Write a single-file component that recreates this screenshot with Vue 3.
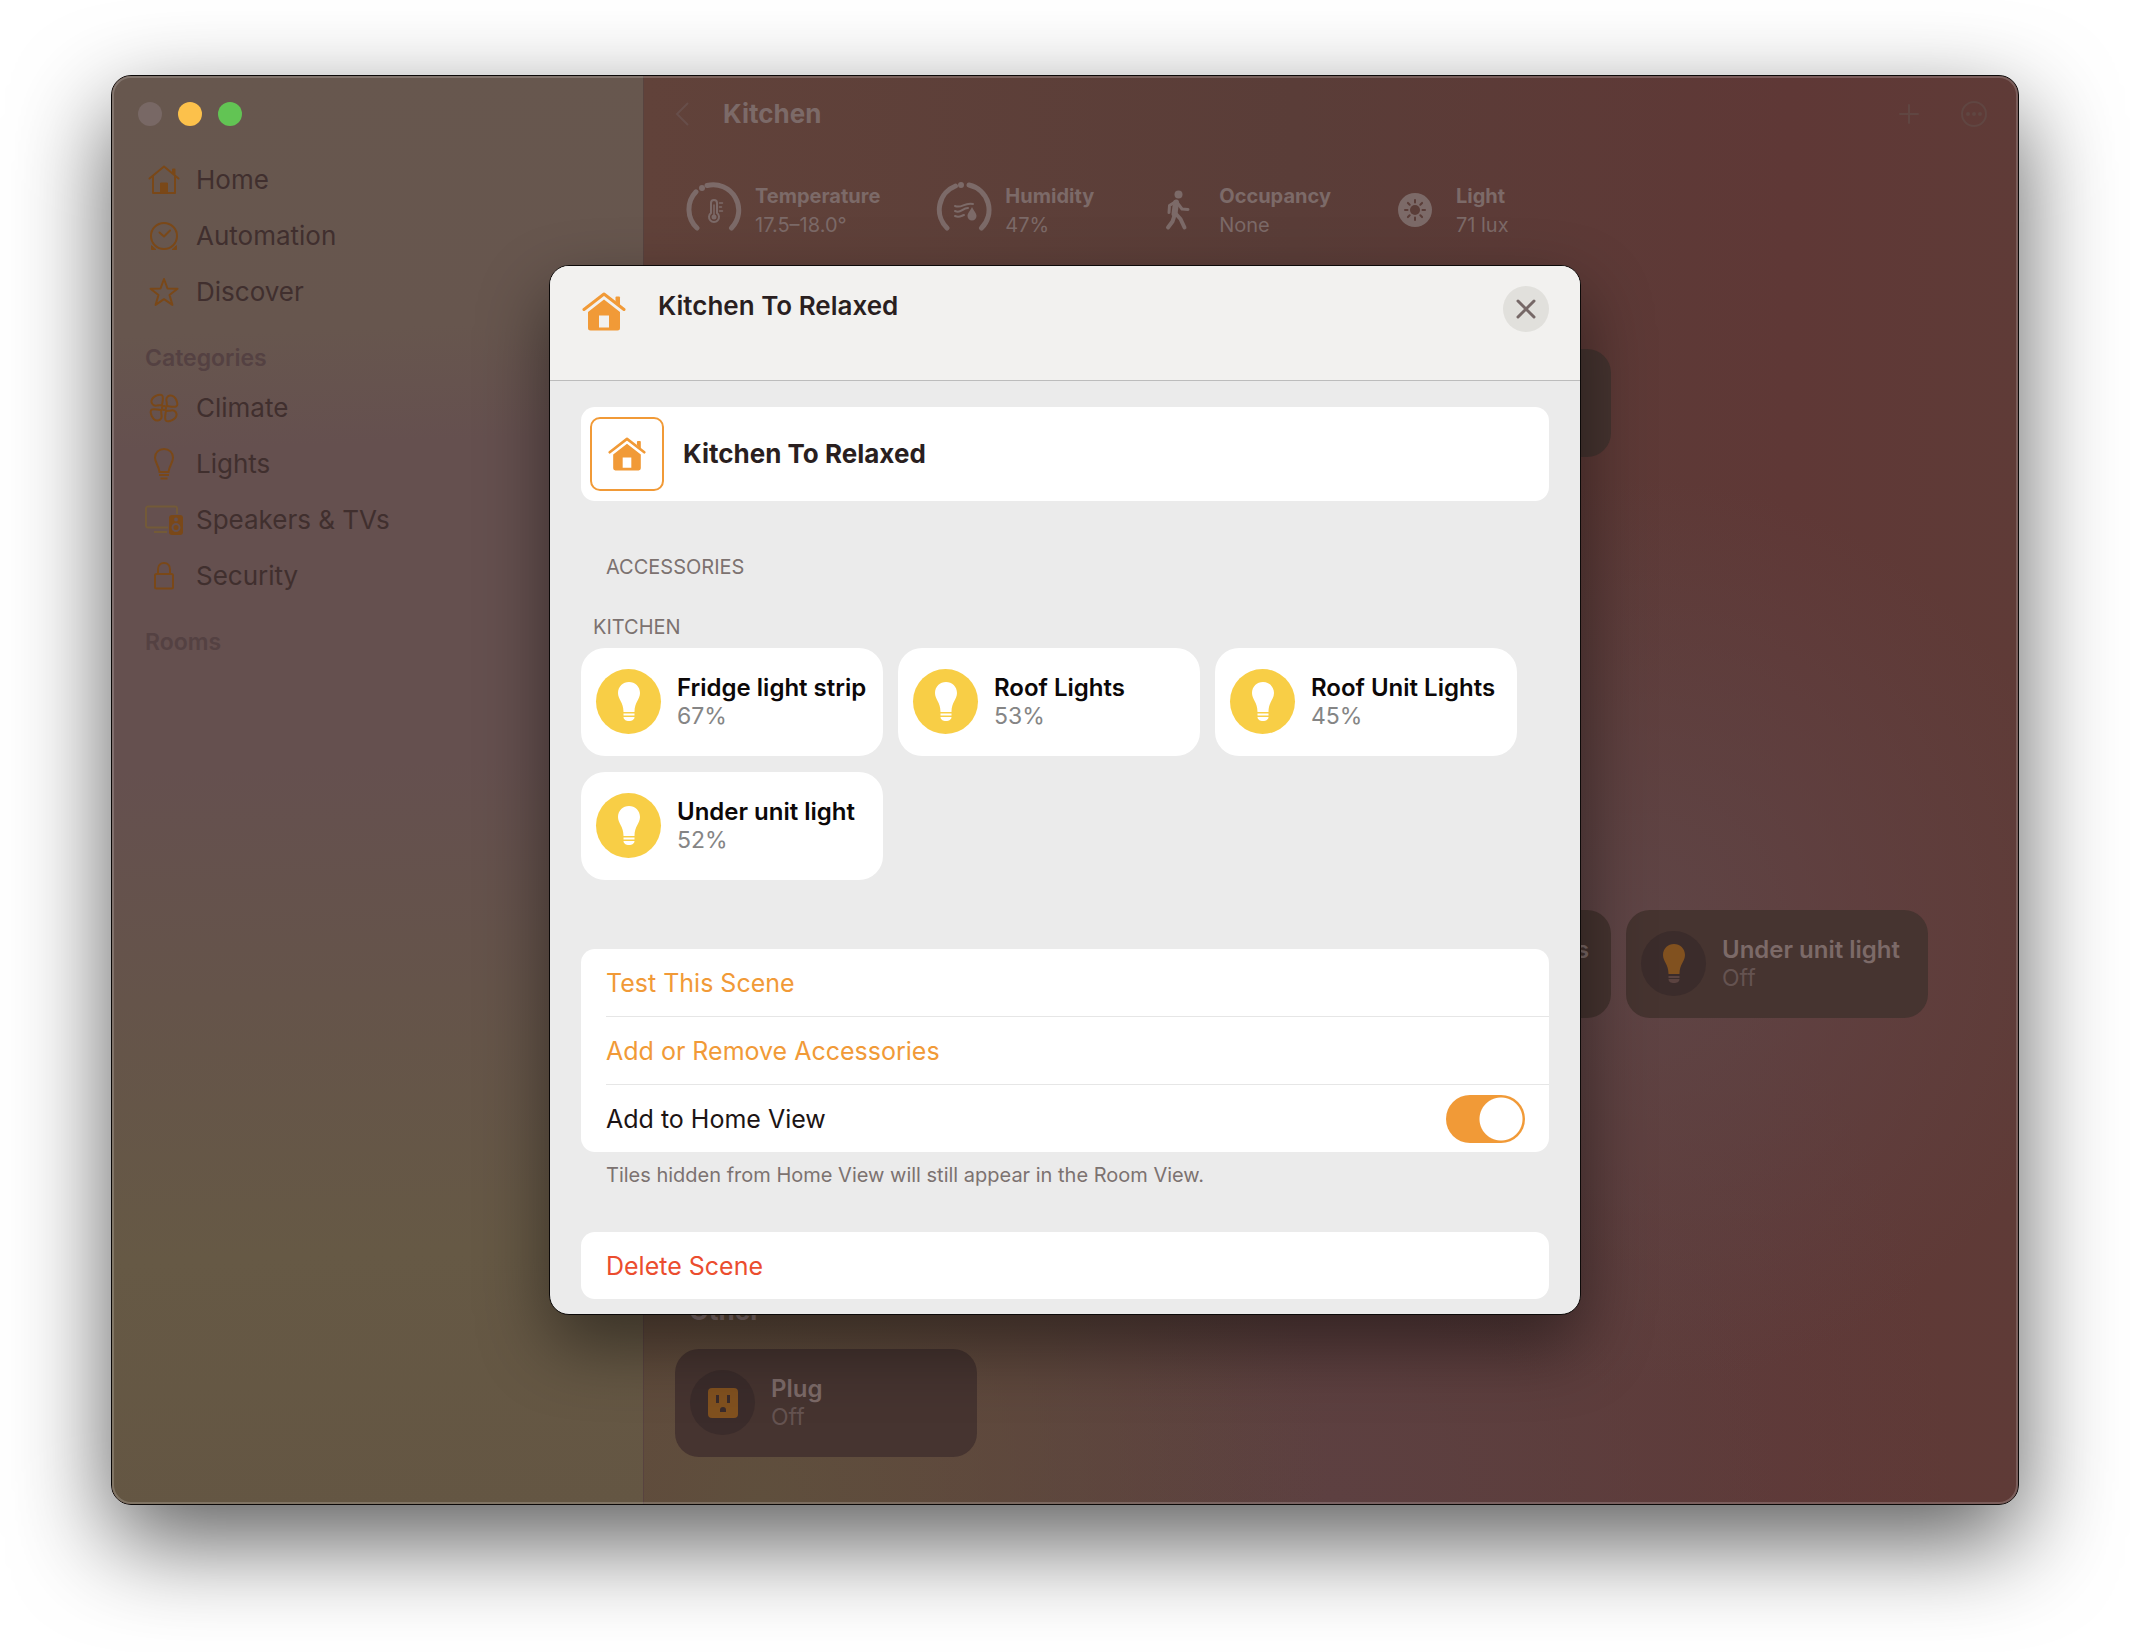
<script setup>
import { ref } from 'vue'

const mainLinks = [
  { label: 'Home', icon: 'home' },
  { label: 'Automation', icon: 'clock' },
  { label: 'Discover', icon: 'star' },
]

const categories = [
  { label: 'Climate', icon: 'fan' },
  { label: 'Lights', icon: 'bulb' },
  { label: 'Speakers & TVs', icon: 'speaker' },
  { label: 'Security', icon: 'lock' },
]

const sensors = [
  { label: 'Temperature', value: '17.5–18.0°', icon: 'thermometer' },
  { label: 'Humidity', value: '47%', icon: 'humidity' },
  { label: 'Occupancy', value: 'None', icon: 'walk' },
  { label: 'Light', value: '71 lux', icon: 'sun' },
]

const accessories = [
  { name: 'Fridge light strip', level: '67%' },
  { name: 'Roof Lights', level: '53%' },
  { name: 'Roof Unit Lights', level: '45%' },
  { name: 'Under unit light', level: '52%' },
]

const sceneName = ref('Kitchen To Relaxed')
const inHomeView = ref(true)
</script>

<template>
  <div class="desktop">
    <div class="window">
      <aside class="sidebar">
        <div class="traffic">
          <button class="dot dot-close" aria-label="Close window"></button>
          <button class="dot dot-min" aria-label="Minimise window"></button>
          <button class="dot dot-zoom" aria-label="Zoom window"></button>
        </div>
        <nav>
          <a v-for="link in mainLinks" :key="link.label" href="#" class="nav-link">
            <span class="nav-icon">
              <svg v-if="link.icon === 'home'" width="32" height="30" viewBox="0 0 32 30" fill="none" stroke="currentColor" stroke-width="2" stroke-linecap="round" stroke-linejoin="round">
                <path d="M1.500 13.500L16 1.500l14.500 12M5 11v17h22V11M25 9V4.500h1.500V10" />
                <path d="M12.500 28v-10h7v10z" fill="currentColor" stroke-width="1" />
              </svg>
              <svg v-else-if="link.icon === 'clock'" width="28" height="30" viewBox="0 0 28 30" fill="none" stroke="currentColor" stroke-width="2" stroke-linecap="round" stroke-linejoin="round">
                <circle cx="14" cy="15" r="13" />
                <path d="M9.500 11.500l4.500 4 6-6" />
                <path d="M1.500 25v3.500h4zM26.500 25v3.500h-4z" fill="currentColor" stroke-width="1" />
              </svg>
              <svg v-else width="30" height="30" viewBox="0 0 30 30" fill="none" stroke="currentColor" stroke-width="2" stroke-linejoin="round">
                <path d="M15 2l3.500 9.500 10 .3-8 6.200 2.900 9.900L15 22.200l-8.400 5.700L9.500 18l-8-6.200 10-.3z" />
              </svg>
            </span>
            {{ link.label }}
          </a>
          <h2 class="nav-heading">Categories</h2>
          <a v-for="link in categories" :key="link.label" href="#" class="nav-link">
            <span class="nav-icon">
              <svg v-if="link.icon === 'fan'" width="30" height="30" viewBox="-15 -15 30 30" fill="none" stroke="currentColor" stroke-width="2" stroke-linejoin="round">
                <path v-for="turn in [0, 90, 180, 270]" :key="turn" :transform="`rotate(${turn})`" d="M-2 -3C-1.500 -6 -.5 -9 -1.500 -12C-2 -13.500 -4 -13.500 -6 -13C-10 -12 -13 -9 -12.500 -6C-12 -3 -9.500 -2 -7 -2.500C-5 -3 -4 -2.500 -2 -3z" />
                <circle r="2" />
              </svg>
              <svg v-else-if="link.icon === 'bulb'" width="20" height="32" viewBox="0 0 20 32" fill="none" stroke="currentColor" stroke-width="2">
                <path d="M5.500 24C5 18 1 15 1 9.500C1 4.500 5 1 10 1s9 3.500 9 8.500C19 15 15 18 14.500 24z" />
                <path d="M5 27h10M6.500 30.500h7" />
              </svg>
              <svg v-else-if="link.icon === 'speaker'" width="38" height="30" viewBox="0 0 38 30" fill="none">
                <path d="M32 9V3.500a2 2 0 0 0-2-2H3a2 2 0 0 0-2 2v17a2 2 0 0 0 2 2h20M9 27h13" stroke="#735a38" stroke-width="2" />
                <rect x="24" y="10" width="14" height="20" rx="3" fill="currentColor" />
                <circle cx="31" cy="14.500" r="2" fill="#65504f" />
                <circle cx="31" cy="22.500" r="3.500" stroke="#65504f" stroke-width="2" />
              </svg>
              <svg v-else width="20" height="28" viewBox="0 0 20 28" fill="none" stroke="currentColor" stroke-width="2">
                <rect x="1" y="12" width="18" height="14.500" rx="1.500" />
                <path d="M4 12V7.500C4 3.500 6.500 1 10 1s6 2.500 6 6.500V12" />
              </svg>
            </span>
            {{ link.label }}
          </a>
          <h2 class="nav-heading">Rooms</h2>
        </nav>
      </aside>

      <main class="room">
        <header class="toolbar">
          <button class="tool back" aria-label="Back">
            <svg width="14" height="24" viewBox="0 0 14 24" fill="none" stroke="currentColor" stroke-width="2"><path d="M13 1L2 12l11 11" /></svg>
          </button>
          <h1>Kitchen</h1>
          <button class="tool" aria-label="Add">
            <svg width="20" height="20" viewBox="0 0 20 20" fill="none" stroke="currentColor" stroke-width="2" stroke-linecap="round"><path d="M10 1v18M1 10h18" /></svg>
          </button>
          <button class="tool" aria-label="More">
            <svg width="26" height="26" viewBox="0 0 26 26" fill="currentColor"><circle cx="13" cy="13" r="12" fill="none" stroke="currentColor" stroke-width="2" /><circle cx="7" cy="13" r="2" /><circle cx="13" cy="13" r="2" /><circle cx="19" cy="13" r="2" /></svg>
          </button>
        </header>

        <ul class="sensors">
          <li v-for="sensor in sensors" :key="sensor.label" class="sensor">
            <svg v-if="sensor.icon === 'thermometer'" width="56" height="56" viewBox="0 0 56 56" fill="none" stroke="currentColor" stroke-linecap="round">
              <path d="M11 46A25.500 25.500 0 0 1 10 9.800M21 3.500A25.500 25.500 0 0 1 45.500 46" stroke-width="5" />
              <circle cx="16" cy="6" r="3" fill="currentColor" stroke="none" />
              <path d="M25 31v-10a3 3 0 0 1 6 0v10a5 5 0 1 1-6 0z" stroke-width="2" />
              <circle cx="28" cy="35" r="2.500" fill="currentColor" stroke="none" />
              <path d="M28 34V23M33.500 21h3M33.500 25h2M33.500 29h3" stroke-width="1.500" />
            </svg>
            <svg v-else-if="sensor.icon === 'humidity'" width="56" height="56" viewBox="0 0 56 56" fill="none" stroke="currentColor" stroke-linecap="round">
              <path d="M11 46A25.500 25.500 0 0 1 19.500 4M33 3A25.500 25.500 0 0 1 45.500 46" stroke-width="5" />
              <circle cx="25" cy="3" r="3" fill="currentColor" stroke="none" />
              <path d="M19 24c7 3 9-4 18-2M19 29c6 3 7-3 13-3M19 34c4 2 6 0 9-1" stroke-width="2" />
              <path d="M36 25c2 4 4.500 6.500 4.500 9a4.500 4.500 0 0 1-9 0c0-2.500 2.500-5 4.500-9z" fill="currentColor" stroke="none" />
            </svg>
            <svg v-else-if="sensor.icon === 'walk'" width="56" height="56" viewBox="0 0 56 56" fill="none" stroke="currentColor" stroke-linecap="round" stroke-linejoin="round">
              <circle cx="28.500" cy="12.500" r="4" fill="currentColor" stroke="none" />
              <path d="M26 20.500L24.500 32" stroke-width="6" />
              <path d="M25 20l-5.500 3.500-.5 7M27.500 21l4.500 6 6 .5" stroke-width="3" />
              <path d="M26 32l4.500 5 4 8.500M24 35l-1.500 4.500-4.500 6" stroke-width="4" />
            </svg>
            <svg v-else width="56" height="56" viewBox="0 0 56 56">
              <circle cx="28" cy="28" r="17" fill="currentColor" />
              <circle cx="28" cy="28" r="5" fill="#5a3d38" />
              <path v-for="turn in [0, 45, 90, 135, 180, 225, 270, 315]" :key="turn" :transform="`rotate(${turn} 28 28)`" d="M28 18v2.500" stroke="#5a3d38" stroke-width="2" stroke-linecap="round" />
            </svg>
            <p>
              <strong>{{ sensor.label }}</strong>
              <span>{{ sensor.value }}</span>
            </p>
          </li>
        </ul>

        <section class="group scenes">
          <div class="tile dim third"></div>
        </section>

        <section class="group lights">
          <article class="tile dim third">
            <span class="badge"></span>
            <p><strong>Roof Unit Lights</strong></p>
          </article>
          <article class="tile dim">
            <span class="badge">
              <svg width="22" height="40" viewBox="0 0 22 40" fill="currentColor">
                <path d="M5.500 30C5.500 20 0 17.500 0 11C0 4.500 5 0 11 0s11 4.500 11 11C22 17.500 16.500 20 16.500 30z" />
                <path d="M5.500 32h11v2h-11zM5.500 35h11c0 3-2.500 4-5.500 4s-5.500-1-5.500-4z" fill="#5b4340" />
              </svg>
            </span>
            <p><strong>Under unit light</strong><span>Off</span></p>
          </article>
        </section>

        <h2 class="group-title">Other</h2>
        <section class="group">
          <article class="tile dim">
            <span class="badge">
              <svg width="30" height="30" viewBox="0 0 30 30">
                <rect width="30" height="30" rx="4" fill="currentColor" />
                <path d="M8 7h3v8H8zM19 7h3v8h-3zM12 24v-2a3 3 0 0 1 6 0v2z" fill="#3a2b2b" />
              </svg>
            </span>
            <p><strong>Plug</strong><span>Off</span></p>
          </article>
        </section>
      </main>

      <div class="sheet" role="dialog" aria-labelledby="sheet-title">
        <header class="sheet-head">
          <svg class="house" width="44" height="39" viewBox="0 0 44 39">
            <path d="M2 17.500L22 2l20 15.500" fill="none" stroke="currentColor" stroke-width="3" stroke-linecap="round" stroke-linejoin="round" />
            <path d="M33.500 9V5.500a1 1 0 0 1 1-1h2.500a1 1 0 0 1 1 1V14z" fill="currentColor" />
            <path fill-rule="evenodd" d="M22 7.500L38 20v16a2.500 2.500 0 0 1-2.500 2.500h-27A2.500 2.500 0 0 1 6 36V20zM17 23.500v12h10v-12z" fill="currentColor" />
          </svg>
          <h2 id="sheet-title">Kitchen To Relaxed</h2>
          <button class="close" aria-label="Close">
            <svg width="20" height="20" viewBox="0 0 20 20" fill="none" stroke="currentColor" stroke-width="3" stroke-linecap="round"><path d="M2 2l16 16M18 2L2 18" /></svg>
          </button>
        </header>

        <div class="sheet-body">
          <div class="card name-card">
            <button class="icon-picker" aria-label="Choose icon">
              <svg width="38" height="34" viewBox="0 0 44 39">
                <path d="M2 17.500L22 2l20 15.500" fill="none" stroke="currentColor" stroke-width="3" stroke-linecap="round" stroke-linejoin="round" />
                <path d="M33.500 9V5.500a1 1 0 0 1 1-1h2.500a1 1 0 0 1 1 1V14z" fill="currentColor" />
                <path fill-rule="evenodd" d="M22 7.500L38 20v16a2.500 2.500 0 0 1-2.500 2.500h-27A2.500 2.500 0 0 1 6 36V20zM17 23.500v12h10v-12z" fill="currentColor" />
              </svg>
            </button>
            <input v-model="sceneName" type="text" aria-label="Scene name" />
          </div>

          <h3 class="caption">ACCESSORIES</h3>
          <h4 class="caption room-caption">KITCHEN</h4>
          <div class="tiles">
            <article v-for="item in accessories" :key="item.name" class="tile">
              <span class="badge">
                <svg width="22" height="40" viewBox="0 0 22 40" fill="currentColor">
                  <path d="M5.500 30C5.500 20 0 17.500 0 11C0 4.500 5 0 11 0s11 4.500 11 11C22 17.500 16.500 20 16.500 30z" />
                  <path d="M5.500 31.500h11v2h-11zM5.500 35h11c0 2.500-2.500 4-5.500 4s-5.500-1.500-5.500-4z" />
                </svg>
              </span>
              <p><strong>{{ item.name }}</strong><span>{{ item.level }}</span></p>
            </article>
          </div>

          <div class="card list">
            <button class="row">Test This Scene</button>
            <button class="row">Add or Remove Accessories</button>
            <div class="row plain">
              <label for="home-view">Add to Home View</label>
              <input id="home-view" v-model="inHomeView" type="checkbox" class="switch" />
            </div>
          </div>
          <p class="note">Tiles hidden from Home View will still appear in the Room View.</p>
          <div class="card">
            <button class="row danger">Delete Scene</button>
          </div>
        </div>
      </div>
    </div>
  </div>
</template>

<style>
body {
  margin: 0;
  background: #fff;
}
</style>

<style scoped>
* {
  box-sizing: border-box;
}

h1, h2, h3, h4, p, ul {
  margin: 0;
  padding: 0;
}

button {
  margin: 0;
  padding: 0;
  border: 0;
  background: none;
  color: inherit;
  font: inherit;
}

svg {
  display: block;
  flex: none;
}

.desktop {
  padding: 75px 111px 147px;
  font-family: Inter, "Liberation Sans", sans-serif;
  font-size: 25px;
  line-height: 32px;
}

.window {
  position: relative;
  display: flex;
  border: 1px solid #0c0908;
  border-radius: 20px;
  background:
    radial-gradient(circle at 80% 60%, #5f4546 0, #5f454600 26%),
    radial-gradient(ellipse at 34% 100%, #5f4f3d 0, #5f4f3d00 32%),
    radial-gradient(ellipse at 64% 100%, #5d4041 0, #5d404100 36%),
    linear-gradient(90deg, #61423a 28%, #5a3d38 62%, #5f3836 88%, #5f3b37);
  box-shadow: 0 36px 96px rgba(0, 0, 0, 0.64);
}

/* Light hairline just inside the window frame */
.window::after {
  content: "";
  position: absolute;
  inset: 0;
  border-radius: 19px;
  box-shadow: inset 0 0 0 2px rgba(255, 255, 255, 0.18);
  pointer-events: none;
}

.sidebar {
  flex: none;
  width: 532px;
  padding-left: 33px;
  border-radius: 19px 0 0 19px;
  background: linear-gradient(178deg, #67574e 0, #67564e 18%, #65504f 26%, #65504f 48%, #65544a 64%, #665945 82%, #645643);
  box-shadow: inset -1px 0 #58433f;
}

.traffic {
  display: flex;
  align-items: center;
  gap: 16px;
  height: 76px;
  margin-left: -7px;
}

.dot {
  width: 24px;
  height: 24px;
  border-radius: 50%;
}

.dot-close { background: #786865; }
.dot-min { background: #fcc14b; }
.dot-zoom { background: #62c454; }

.nav-link {
  display: flex;
  align-items: center;
  gap: 13px;
  height: 56px;
  color: #402f2e;
  font-size: 26px;
  text-decoration: none;
}

.nav-icon {
  display: flex;
  justify-content: center;
  width: 38px;
  color: #7a4818;
}

.nav-heading {
  padding: 22px 0 6px;
  color: #544142;
  font-size: 23px;
  font-weight: 600;
}

.room {
  flex: 1;
  min-width: 0;
  padding: 0 31px 47px;
  color: #7c6a68;
}

.toolbar {
  display: flex;
  align-items: center;
  gap: 42px;
  height: 76px;
}

.toolbar h1 {
  flex: 1;
  margin-left: -8px;
  font-size: 26px;
  font-weight: 700;
}

.tool {
  color: #604642;
}

.back {
  color: #674e4a;
}

.sensors {
  display: flex;
  gap: 56px;
  margin: 30px 0 0 11px;
  list-style: none;
}

.sensor {
  display: flex;
  align-items: flex-start;
  gap: 13px;
  font-size: 20px;
  line-height: 29px;
}

.sensor strong,
.sensor span,
.tile strong,
.tile span {
  display: block;
}

.group,
.tiles {
  display: grid;
  grid-template-columns: repeat(auto-fill, 302px);
  gap: 16px 15px;
}

.third {
  grid-column: 3;
}

.scenes {
  margin-top: 109px;
}

.lights {
  margin-top: 453px;
}

.group-title {
  margin: 277px 0 22px 14px;
  color: #8a7573;
  font-size: 26px;
}

.tile {
  display: flex;
  gap: 16px;
  height: 108px;
  padding: 21px 0 0 15px;
  border-radius: 24px;
  background: #fff;
  color: #858585;
  font-size: 23px;
  line-height: 29px;
  white-space: nowrap;
}

.tile p {
  padding-top: 4px;
}

.tile strong {
  color: #0c0808;
  font-size: 24px;
  font-weight: 600;
}

.tile .badge {
  display: flex;
  flex: none;
  align-items: center;
  justify-content: center;
  width: 65px;
  height: 65px;
  border-radius: 50%;
  background: #f8ce46;
  color: #fff;
}

.tile.dim {
  background: #463430;
  color: #655351;
}

.dim strong {
  color: #7c6a68;
}

.dim .badge {
  background: #3b2c2b;
  color: #81511f;
}

.sheet {
  position: absolute;
  top: 189px;
  left: 50%;
  width: 1032px;
  max-width: 100%;
  transform: translateX(-50%);
  overflow: hidden;
  border: 1px solid #0c0908;
  border-radius: 20px;
  background: #ebebeb;
  box-shadow: 0 30px 70px rgba(0, 0, 0, 0.45);
}

.sheet-head {
  display: flex;
  align-items: flex-start;
  height: 115px;
  padding: 20px 31px 0 32px;
  border-bottom: 1px solid #bcbcbc;
  background: #f2f1ef;
}

.house {
  margin-top: 6px;
  color: #f19a37;
}

.sheet-head h2 {
  flex: 1;
  margin: 4px 0 0 32px;
  color: #2a1f1f;
  font-size: 26px;
  font-weight: 600;
}

.close {
  display: grid;
  place-items: center;
  width: 46px;
  height: 46px;
  border-radius: 50%;
  background: #e1e0dc;
  color: #766867;
}

.sheet-body {
  padding: 26px 31px 15px;
}

.card {
  overflow: hidden;
  border-radius: 14px;
  background: #fff;
}

.name-card {
  display: flex;
  align-items: center;
  gap: 19px;
  padding: 10px 9px;
}

.icon-picker {
  display: grid;
  flex: none;
  place-items: center;
  width: 74px;
  height: 74px;
  border: 2px solid #f19a37;
  border-radius: 10px;
  color: #f19a37;
}

.name-card input {
  flex: 1;
  min-width: 0;
  padding: 0;
  border: 0;
  outline: 0;
  background: none;
  color: #2a1f1f;
  font: 700 26px/32px Inter, "Liberation Sans", sans-serif;
}

.caption {
  margin: 50px 25px 0;
  color: #7c7270;
  font-size: 20px;
  font-weight: 400;
}

.room-caption {
  margin: 28px 12px 5px;
}

.list {
  margin-top: 69px;
}

.row {
  display: flex;
  align-items: center;
  justify-content: space-between;
  width: 100%;
  height: 67px;
  padding: 0 24px 0 25px;
  color: #f19a37;
  text-align: left;
}

.list .row {
  width: calc(100% - 25px);
  margin-left: 25px;
  padding-left: 0;
}

.list .row + .row {
  height: 68px;
  border-top: 1px solid #e6e6e6;
}

.list .plain {
  color: #1c1414;
}

.row.danger {
  color: #eb4d2e;
}

.switch {
  width: 79px;
  height: 48px;
  margin: 0;
  border-radius: 24px;
  background: radial-gradient(circle at 55px 24px, #fff 21px, #fff0 22px) #f19a37;
  appearance: none;
}

.switch:not(:checked) {
  background: radial-gradient(circle at 24px 24px, #fff 21px, #fff0 22px) #d2d2d2;
}

.note {
  margin: 7px 25px 41px;
  color: #7c7270;
  font-size: 20px;
}
</style>
